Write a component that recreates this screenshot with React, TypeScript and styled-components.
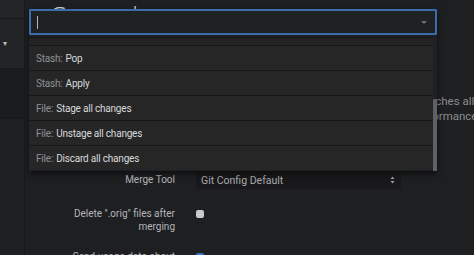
import React from 'react';
import styled, { createGlobalStyle } from 'styled-components';

const GlobalStyle = createGlobalStyle`
  html, body {
    margin: 0;
    padding: 0;
    background: #1e1f21;
  }
  body {
    font-family: Roboto, 'Open Sans', sans-serif;
    -webkit-font-smoothing: antialiased;
  }
`;

const Workspace = styled.div`
  position: relative;
  display: flex;
  width: 474px;
  height: 255px;
  overflow: hidden;
  background: #1e1f21;
`;

const Sidebar = styled.nav`
  display: flex;
  flex-direction: column;
  width: 24px;
  flex-shrink: 0;
  background: #1f2022;
  border-right: 1px solid #18191b;
`;

const SideSection = styled.div<{ $height: number; $tone: string }>`
  display: flex;
  align-items: center;
  height: ${(p) => p.$height}px;
  background: ${(p) => p.$tone};
  border-bottom: 1px solid #18191b;
  color: #b9bbbe;
  font-size: 8px;
  padding-left: 3px;
`;

const Settings = styled.main`
  flex: 1;
  display: flex;
  flex-direction: column;
  color: #c5c7ca;
  font-size: 10px;
`;

const Title = styled.h1`
  margin: 0 0 0 24px;
  font-family: 'Open Sans', sans-serif;
  font-size: 25px;
  font-weight: 300;
  line-height: 30px;
  color: #d2d4d7;
`;

const Row = styled.div<{ $top: number }>`
  display: grid;
  grid-template-columns: 150px 1fr;
  column-gap: 22px;
  margin-top: ${(p) => p.$top}px;
`;

const Label = styled.div<{ $single?: boolean }>`
  text-align: right;
  line-height: ${(p) => (p.$single ? '18px' : '13px')};
  color: #b4b6b9;
`;

const Description = styled.div`
  white-space: nowrap;
  line-height: 15px;
  margin-left: -8px;
  font-size: 11.5px;
  color: #8a8c90;
`;

const Select = styled.div`
  display: flex;
  align-items: center;
  justify-content: space-between;
  width: 205px;
  height: 18px;
  padding: 0 6px 0 5px;
  box-sizing: border-box;
  margin-left: -1px;
  background: #19191b;
  border-radius: 3px;
  color: #a9abae;
  font-size: 10.5px;
`;

const Checkbox = styled.span<{ $checked?: boolean }>`
  display: block;
  width: 8px;
  height: 8px;
  margin: 3px 0 0 -1px;
  border-radius: 2px;
  background: ${(p) => (p.$checked ? '#3b73c2' : '#c9cacc')};
`;

const Palette = styled.div`
  position: absolute;
  left: 29px;
  top: 9px;
  width: 408px;
  display: flex;
  flex-direction: column;
  gap: 2px;
  background: #1f2022;
  box-shadow: 0 3px 6px rgba(0, 0, 0, 0.55);
`;

const Query = styled.div`
  position: relative;
  display: flex;
  align-items: center;
  height: 26px;
  padding-left: 6px;
  box-sizing: border-box;
  background: #202123;
  border: 2px solid #3a6cab;
  border-radius: 1px;
`;

const Caret = styled.span`
  display: block;
  width: 1px;
  height: 13px;
  background: #b4b6b8;
`;

const DropArrow = styled.span`
  position: absolute;
  right: 8px;
  top: 10px;
  width: 0;
  height: 0;
  border-left: 3px solid transparent;
  border-right: 3px solid transparent;
  border-top: 3px solid #6e7074;
`;

const ListViewport = styled.div`
  position: relative;
  height: 134px;
  overflow: hidden;
`;

const ItemList = styled.ul`
  list-style: none;
  margin: 0;
  padding: 0;
  width: 404px;
  border-top: 1px solid #161617;
  padding-top: 7px;
  background: #232325;
`;

const Item = styled.li`
  display: flex;
  align-items: center;
  height: 25px;
  padding-left: 7px;
  box-sizing: border-box;
  background: #262627;
  border-top: 1px solid #161617;
  font-size: 10px;
  letter-spacing: -0.2px;
  color: #d8d9db;
  white-space: nowrap;
`;

const Prefix = styled.span`
  color: #8f9194;
  margin-right: 3px;
`;

const ScrollTrack = styled.div`
  position: absolute;
  top: 0;
  right: 0;
  bottom: 0;
  width: 4px;
  background: #1f2022;
`;

const ScrollThumb = styled.div`
  position: absolute;
  right: 0;
  bottom: 0;
  width: 4px;
  height: 72px;
  background: #5d6064;
  border-radius: 1px;
`;

const commands = [
  { scope: 'Stash', name: 'Pop' },
  { scope: 'Stash', name: 'Apply' },
  { scope: 'File', name: 'Stage all changes' },
  { scope: 'File', name: 'Unstage all changes' },
  { scope: 'File', name: 'Discard all changes' },
];

const UpDown = () => (
  <svg width="5" height="8" viewBox="0 0 5 8">
    <path d="M2.5 0.5 L4.5 3 H0.5 Z M2.5 7.5 L4.5 5 H0.5 Z" fill="#9c9ea1" />
  </svg>
);

const App = () => {
  return (
    <Workspace>
      <GlobalStyle />
      <Sidebar>
        <SideSection $height={18} $tone="#242527" />
        <SideSection $height={49} $tone="#232426">
          ▾
        </SideSection>
        <SideSection $height={49} $tone="#1b1c1e" />
      </Sidebar>
      <Settings>
        <Title>General</Title>
        <Row $top={64}>
          <Label>Refresh on focus</Label>
          <Description>
            Periodically refresh the repo status. This also fetches all remotes
            <br />
            the remote branches, which can slow down performance
          </Description>
        </Row>
        <Row $top={47}>
          <Label $single>Merge Tool</Label>
          <Select>
            Git Config Default
            <UpDown />
          </Select>
        </Row>
        <Row $top={18}>
          <Label>
            Delete ".orig" files after
            <br />
            merging
          </Label>
          <Checkbox />
        </Row>
        <Row $top={17}>
          <Label>
            Send usage data about
            <br />
            Git-Plus
          </Label>
          <Checkbox $checked />
        </Row>
      </Settings>

      <Palette>
        <Query>
          <Caret />
          <DropArrow />
        </Query>
        <ListViewport>
          <ItemList>
            {commands.map((c) => (
              <Item key={c.scope + c.name}>
                <Prefix>{c.scope}:</Prefix>
                {c.name}
              </Item>
            ))}
          </ItemList>
          <ScrollTrack>
            <ScrollThumb />
          </ScrollTrack>
        </ListViewport>
      </Palette>
    </Workspace>
  );
};

export default App;
